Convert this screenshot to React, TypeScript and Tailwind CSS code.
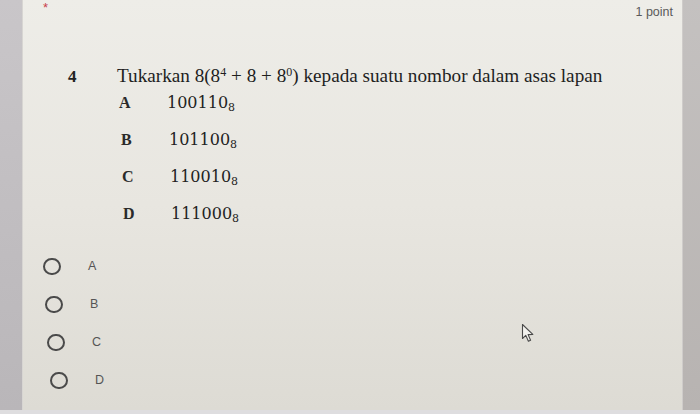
const options = [
  { label: "A", value: "100110", shift: "ml-0" },
  { label: "B", value: "101100", shift: "ml-[2px]" },
  { label: "C", value: "110010", shift: "ml-[3px]" },
  { label: "D", value: "111000", shift: "ml-[4px]" },
];

const choices = [
  { label: "A", shift: "ml-0" },
  { label: "B", shift: "ml-[2px]" },
  { label: "C", shift: "ml-[4px]" },
  { label: "D", shift: "ml-[7px]" },
];

function Cursor() {
  return (
    <svg width="14" height="20" viewBox="0 0 14 20" className="absolute left-[498px] top-[323px]">
      <path
        d="M1.5 1.5 L1.5 15.5 L4.8 12.4 L7.4 18.2 L9.6 17.2 L7.1 11.6 L11.8 11.4 Z"
        fill="#f3f2ee"
        stroke="#4a4a4a"
        strokeWidth="1.1"
        strokeLinejoin="round"
      />
    </svg>
  );
}

export default function App() {
  return (
    <div className="w-[700px] h-[414px] flex flex-col bg-[#c2bfc1] overflow-hidden">
      <div className="flex flex-1">
        <div className="w-[22px] bg-gradient-to-b from-[#c9c6c9] to-[#b9b6b9]" />
        <div className="relative flex-1 bg-gradient-to-b from-[#eeede8] via-[#e8e6e0] to-[#dddbd4] border-l border-[#d7d5d2]">
          <div className="flex justify-between h-[22px] pl-[20px] pr-[9px]" style={{ fontFamily: "'Liberation Sans', Arial, sans-serif" }}>
            <span className="text-[#c8404c] text-[13px] leading-none mt-[1px]">*</span>
            <span className="text-[#5a5a5a] text-[12.5px] mt-[6px] leading-none">1 point</span>
          </div>

          <div className="mt-[40px] pl-[45px]" style={{ fontFamily: "'Liberation Serif', 'Times New Roman', serif" }}>
            <div className="flex items-baseline">
              <span className="w-[49px] font-bold text-[17px] text-[#222]">4</span>
              <span className="text-[19.2px] text-[#1e1e1e]">
                Tukarkan 8(8<sup className="text-[12px]">4</sup> + 8 + 8<sup className="text-[12px]">0</sup>) kepada suatu nombor dalam asas lapan
              </span>
            </div>
            <div className="pl-[51px] flex flex-col gap-[13px]">
              {options.map((o) => (
                <div key={o.label} className={`flex items-baseline h-[24px] ${o.shift}`}>
                  <span className="w-[48px] font-bold text-[16px] text-[#2a2a2a]">{o.label}</span>
                  <span className="text-[16px] text-[#222]" style={{ fontFamily: "'DejaVu Serif', serif" }}>
                    {o.value}
                    <sub className="text-[11px]">8</sub>
                  </span>
                </div>
              ))}
            </div>
          </div>

          <div className="mt-[32px] pl-[20px] flex flex-col gap-[21px]" style={{ fontFamily: "'Liberation Sans', Arial, sans-serif" }}>
            {choices.map((c) => (
              <div key={c.label} className={`flex items-center h-[17px] ${c.shift}`}>
                <span className="w-[18px] h-[17px] rounded-full border-2 border-[#4a4a4a]" />
                <span className="ml-[27px] text-[12.5px] text-[#555]">{c.label}</span>
              </div>
            ))}
          </div>

          <Cursor />
        </div>
        <div className="w-[18px] bg-gradient-to-b from-[#c4c1c0] to-[#b7b3b1] border-l border-[#cfccca]" />
      </div>
      <div className="h-[4px] bg-[#dedddf]" />
    </div>
  );
}
